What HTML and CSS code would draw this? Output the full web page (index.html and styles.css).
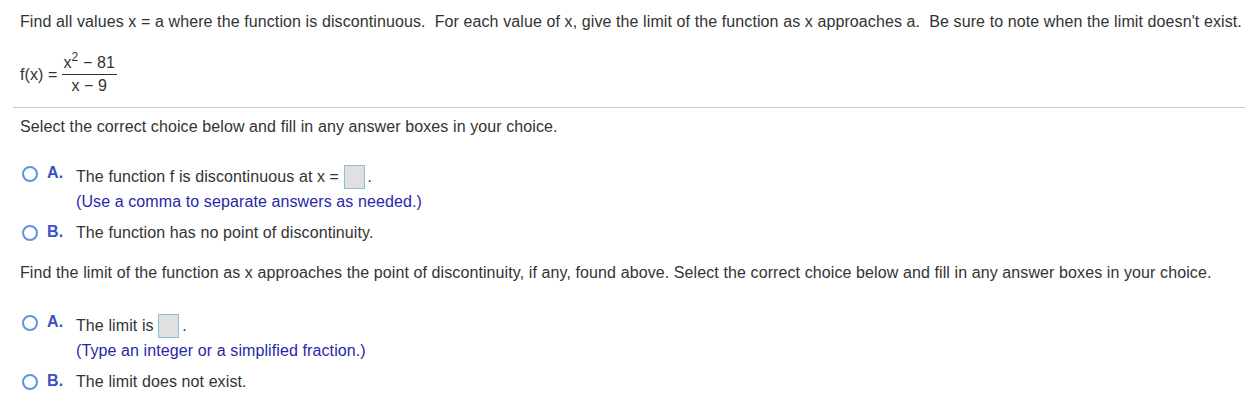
FILE: index.html
```html
<!DOCTYPE html>
<html>
<head>
<meta charset="utf-8">
<link rel="stylesheet" href="styles.css">
</head>
<body>
<div class="page">
  <p class="intro">Find all values x = a where the function is discontinuous.&nbsp; For each value of x, give the limit of the function as x approaches a.&nbsp; Be sure to note when the limit doesn't exist.</p>
  <div class="formula">
    <span class="lhs">f(x) =</span>
    <span class="frac">
      <span class="num">x<sup>2</sup> − 81</span>
      <span class="den">x − 9</span>
    </span>
  </div>
  <hr class="rule">
  <p class="instr">Select the correct choice below and fill in any answer boxes in your choice.</p>
  <div class="choices first">
    <div class="choice">
      <span class="radio"></span>
      <span class="letter">A.</span>
      <div class="body">
        <div class="line">The function f is discontinuous at x =&nbsp;<span class="box"></span><span class="dot">.</span></div>
        <div class="hint">(Use a comma to separate answers as needed.)</div>
      </div>
    </div>
    <div class="choice">
      <span class="radio"></span>
      <span class="letter">B.</span>
      <div class="body"><div class="line">The function has no point of discontinuity.</div></div>
    </div>
  </div>
  <p class="instr second">Find the limit of the function as x approaches the point of discontinuity, if any, found above. Select the correct choice below and fill in any answer boxes in your choice.</p>
  <div class="choices second">
    <div class="choice">
      <span class="radio"></span>
      <span class="letter">A.</span>
      <div class="body">
        <div class="line">The limit is&nbsp;<span class="box"></span><span class="dot">.</span></div>
        <div class="hint">(Type an integer or a simplified fraction.)</div>
      </div>
    </div>
    <div class="choice">
      <span class="radio"></span>
      <span class="letter">B.</span>
      <div class="body"><div class="line">The limit does not exist.</div></div>
    </div>
  </div>
</div>
</body>
</html>
```
FILE: styles.css
```css
* { box-sizing: border-box; }
html, body { margin: 0; padding: 0; background: #fff; }
body {
  font-family: "Liberation Sans", Arial, sans-serif;
  font-size: 16px;
  letter-spacing: 0.1px;
  color: #333;
}
.page { padding-top: 13px; }
p { margin: 0; }
.intro { padding-left: 20px; line-height: 18px; }
.formula {
  display: flex;
  align-items: flex-start;
  padding-left: 20px;
  margin-top: 23px;
}
.lhs { margin-top: 12px; margin-right: 4px; line-height: 18px; }
.frac { display: flex; flex-direction: column; align-items: center; }
.num { padding: 0 2px 2px; border-bottom: 1px solid #333; line-height: 18px; }
.num sup { font-size: 12px; vertical-align: 7px; line-height: 0; }
.den { padding-top: 2px; line-height: 18px; }
.rule {
  margin: 12px 0 0 13px;
  border: 0;
  border-top: 1px solid #c9cbdb;
  height: 0;
}
.instr { padding-left: 20px; margin-top: 10px; line-height: 18px; }
.instr.second { margin-top: 22px; }
.choices { padding-left: 22px; }
.choices.first { margin-top: 29px; }
.choices.second { margin-top: 32px; }
.choice { display: flex; align-items: flex-start; }
.choice + .choice { margin-top: 13px; }
.radio {
  width: 16px; height: 16px;
  border: 2px solid #6194dc;
  border-radius: 50%;
  margin-top: 1px;
  flex: none;
}
.letter {
  font-weight: bold;
  color: #3a50c2;
  width: 38px;
  padding-left: 9px;
  line-height: 18px;
  margin-top: -1px;
  flex: none;
}
.body { line-height: 18px; }
.line { display: flex; align-items: center; min-height: 18px; }
.box {
  display: inline-block;
  width: 21px; height: 24px;
  background: #e0e0e0;
  border: 1px solid #86c2d6;
}
.dot { margin-left: 3px; }
.hint { color: #2727aa; margin-top: 4px; }
```
